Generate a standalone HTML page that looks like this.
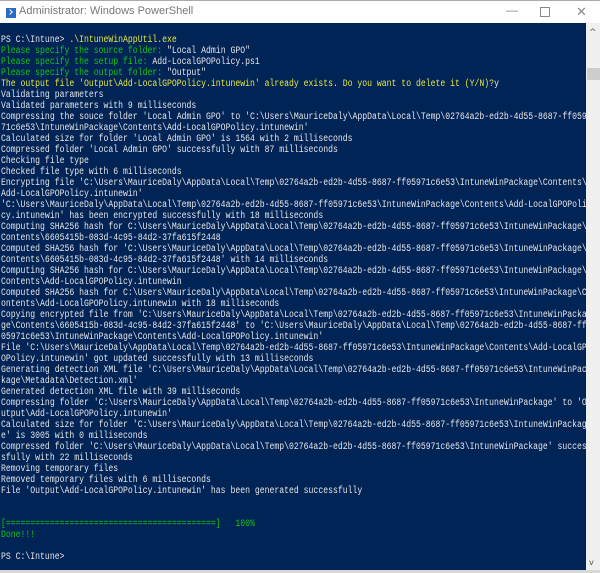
<!DOCTYPE html>
<html><head><meta charset="utf-8"><style>
html,body{margin:0;padding:0;width:600px;height:573px;overflow:hidden;background:#fff;}
.title{position:absolute;left:0;top:0;width:600px;height:23px;background:#fff;border-top:1px solid #aaa;box-sizing:border-box;}
.title .t{position:absolute;left:19px;top:4px;font:11px "Liberation Sans",sans-serif;color:#777;}
.icon{position:absolute;left:6px;top:7px;width:10px;height:10px;background:#2a6cc4;}
.icon:after{content:"";position:absolute;left:2px;top:2px;width:3px;height:3px;border-right:1.2px solid #fff;border-bottom:1.2px solid #fff;transform:rotate(-45deg);}
.ctl{position:absolute;top:4px;font:12px "Liberation Sans",sans-serif;color:#888;}
.con{position:absolute;left:0;top:23px;width:586px;height:547px;background:#012456;overflow:hidden;}
pre{margin:0;position:absolute;left:1px;top:12px;font-family:"Liberation Mono",monospace;font-size:10px;transform:scaleX(0.8135);transform-origin:0 0;line-height:11px;color:#e6e6e6;white-space:pre;}
.g{color:#13c513}.y{color:#e8e840}
.sb{position:absolute;left:586px;top:23px;width:14px;height:547px;background:#f0f0f0;}
.bot{position:absolute;left:0;top:570px;width:600px;height:3px;background:#d8d8d8;}
</style></head><body>
<div class="title"><div class="icon"></div><div class="t">Administrator: Windows PowerShell</div>
<div class="ctl" style="left:506px;top:2px">—</div>
<div style="position:absolute;left:540px;top:6px;width:8px;height:8px;border:1px solid #888"></div>
<div class="ctl" style="left:576px;top:3px;font-size:13px">✕</div></div>
<div class="con"><pre>PS C:\Intune&gt; <span class="y">.\IntuneWinAppUtil.exe</span>
<span class="g">Please specify the source folder: </span>"Local Admin GPO"
<span class="g">Please specify the setup file: </span>Add-LocalGPOPolicy.ps1
<span class="g">Please specify the output folder: </span>"Output"
<span class="y">The output file 'Output\Add-LocalGPOPolicy.intunewin' already exists. Do you want to delete it (Y/N)?</span>y
Validating parameters
Validated parameters with 9 milliseconds
Compressing the souce folder 'Local Admin GPO' to 'C:\Users\MauriceDaly\AppData\Local\Temp\02764a2b-ed2b-4d55-8687-ff059
71c6e53\IntuneWinPackage\Contents\Add-LocalGPOPolicy.intunewin'
Calculated size for folder 'Local Admin GPO' is 1564 with 2 milliseconds
Compressed folder 'Local Admin GPO' successfully with 87 milliseconds
Checking file type
Checked file type with 6 milliseconds
Encrypting file 'C:\Users\MauriceDaly\AppData\Local\Temp\02764a2b-ed2b-4d55-8687-ff05971c6e53\IntuneWinPackage\Contents\
Add-LocalGPOPolicy.intunewin'
'C:\Users\MauriceDaly\AppData\Local\Temp\02764a2b-ed2b-4d55-8687-ff05971c6e53\IntuneWinPackage\Contents\Add-LocalGPOPoli
cy.intunewin' has been encrypted successfully with 18 milliseconds
Computing SHA256 hash for C:\Users\MauriceDaly\AppData\Local\Temp\02764a2b-ed2b-4d55-8687-ff05971c6e53\IntuneWinPackage\
Contents\6605415b-083d-4c95-84d2-37fa615f2448
Computed SHA256 hash for 'C:\Users\MauriceDaly\AppData\Local\Temp\02764a2b-ed2b-4d55-8687-ff05971c6e53\IntuneWinPackage\
Contents\6605415b-083d-4c95-84d2-37fa615f2448' with 14 milliseconds
Computing SHA256 hash for C:\Users\MauriceDaly\AppData\Local\Temp\02764a2b-ed2b-4d55-8687-ff05971c6e53\IntuneWinPackage\
Contents\Add-LocalGPOPolicy.intunewin
Computed SHA256 hash for C:\Users\MauriceDaly\AppData\Local\Temp\02764a2b-ed2b-4d55-8687-ff05971c6e53\IntuneWinPackage\C
ontents\Add-LocalGPOPolicy.intunewin with 18 milliseconds
Copying encrypted file from 'C:\Users\MauriceDaly\AppData\Local\Temp\02764a2b-ed2b-4d55-8687-ff05971c6e53\IntuneWinPacka
ge\Contents\6605415b-083d-4c95-84d2-37fa615f2448' to 'C:\Users\MauriceDaly\AppData\Local\Temp\02764a2b-ed2b-4d55-8687-ff
05971c6e53\IntuneWinPackage\Contents\Add-LocalGPOPolicy.intunewin'
File 'C:\Users\MauriceDaly\AppData\Local\Temp\02764a2b-ed2b-4d55-8687-ff05971c6e53\IntuneWinPackage\Contents\Add-LocalGP
OPolicy.intunewin' got updated successfully with 13 milliseconds
Generating detection XML file 'C:\Users\MauriceDaly\AppData\Local\Temp\02764a2b-ed2b-4d55-8687-ff05971c6e53\IntuneWinPac
kage\Metadata\Detection.xml'
Generated detection XML file with 39 milliseconds
Compressing folder 'C:\Users\MauriceDaly\AppData\Local\Temp\02764a2b-ed2b-4d55-8687-ff05971c6e53\IntuneWinPackage' to 'O
utput\Add-LocalGPOPolicy.intunewin'
Calculated size for folder 'C:\Users\MauriceDaly\AppData\Local\Temp\02764a2b-ed2b-4d55-8687-ff05971c6e53\IntuneWinPackag
e' is 3005 with 0 milliseconds
Compressed folder 'C:\Users\MauriceDaly\AppData\Local\Temp\02764a2b-ed2b-4d55-8687-ff05971c6e53\IntuneWinPackage' succes
sfully with 22 milliseconds
Removing temporary files
Removed temporary files with 6 milliseconds
File 'Output\Add-LocalGPOPolicy.intunewin' has been generated successfully


<span class="g">[===========================================]   100%</span>
<span class="g">Done!!!</span>

PS C:\Intune&gt;</pre></div>
<div class="sb">
<div style="position:absolute;left:3px;top:5px;font:9px 'DejaVu Sans',sans-serif;color:#555">^</div>
<div style="position:absolute;left:1px;top:45px;width:13px;height:12px;background:#cdcdcd"></div>
<div style="position:absolute;left:3px;top:535px;font:8px 'DejaVu Sans',sans-serif;color:#555">v</div>
</div>
<div class="bot"></div>
</body></html>
